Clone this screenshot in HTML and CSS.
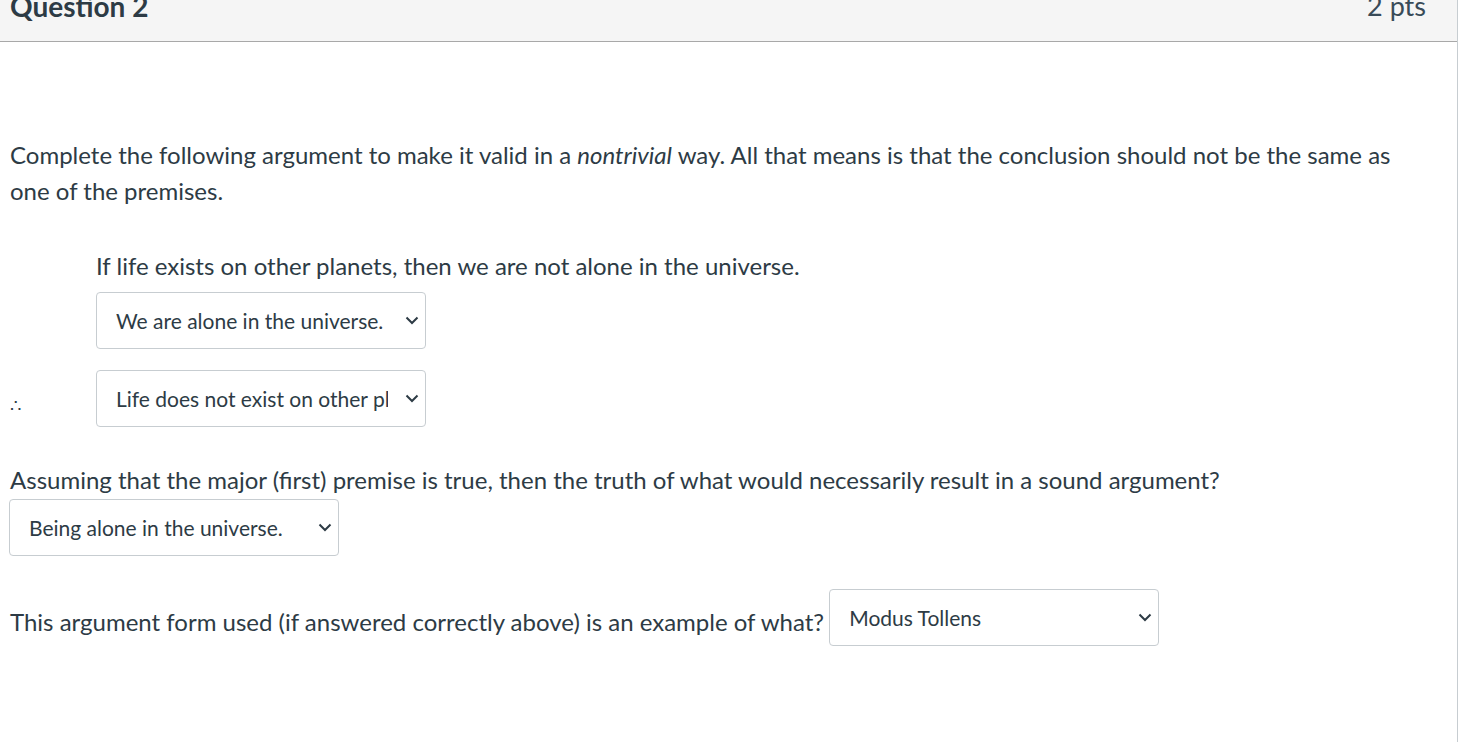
FILE: index.html
```html
<!DOCTYPE html>
<html lang="en">
  <head>
    <meta charset="UTF-8" />
    <meta name="viewport" content="width=device-width, initial-scale=1.0" />
    <title>Question 2</title>
    <link rel="stylesheet" href="styles.css">
  </head>
  <body>
    <div class="question">
      <!-- Header -->
      <div class="question-header">
        <span class="question-name">Question 2</span>
        <span class="question-points">2 pts</span>
      </div>

      <!-- Body -->
      <div class="question-body">
        <p class="intro">
          Complete the following argument to make it valid in a <em>nontrivial</em> way. All that means is that the conclusion should not be the same as one of the premises.
        </p>

        <div class="argument">
          <div class="arg-row premise">
            <span class="therefore"></span>
            <span class="premise-text">If life exists on other planets, then we are not alone in the universe.</span>
          </div>
          <div class="arg-row">
            <span class="therefore"></span>
            <span class="select-wrap">
              <select class="answer">
                <option>We are alone in the universe.</option>
                <option>We are not alone in the universe.</option>
              </select>
              <svg class="chevron" width="14" height="9" viewBox="0 0 14 9"><path d="M1.5 1.5 7 7l5.5-5.5" fill="none" stroke="#2d3b45" stroke-width="2"/></svg>
            </span>
          </div>
          <div class="arg-row">
            <span class="therefore">&there4;</span>
            <span class="select-wrap">
              <select class="answer">
                <option>Life does not exist on other planets.</option>
                <option>Life exists on other planets.</option>
              </select>
              <svg class="chevron" width="14" height="9" viewBox="0 0 14 9"><path d="M1.5 1.5 7 7l5.5-5.5" fill="none" stroke="#2d3b45" stroke-width="2"/></svg>
            </span>
          </div>
        </div>

        <p class="prompt">Assuming that the major (first) premise is true, then the truth of what would necessarily result in a sound argument?</p>
        <span class="select-wrap standalone">
          <select class="answer">
            <option>Being alone in the universe.</option>
            <option>Not being alone in the universe.</option>
          </select>
          <svg class="chevron" width="14" height="9" viewBox="0 0 14 9"><path d="M1.5 1.5 7 7l5.5-5.5" fill="none" stroke="#2d3b45" stroke-width="2"/></svg>
        </span>

        <p class="prompt last">
          This argument form used (if answered correctly above) is an example of what?
          <span class="select-wrap inline">
            <select class="answer">
              <option>Modus Tollens</option>
              <option>Modus Ponens</option>
            </select>
            <svg class="chevron" width="14" height="9" viewBox="0 0 14 9"><path d="M1.5 1.5 7 7l5.5-5.5" fill="none" stroke="#2d3b45" stroke-width="2"/></svg>
          </span>
        </p>
      </div>
    </div>
  </body>
</html>
```

FILE: styles.css
```css
/* General Styles */
body {
  margin: 0;
  background: #fff;
  font-family: Lato, "Open Sans", sans-serif;
  color: #2d3b45;
  overflow: hidden;
}

.question {
  width: 1458px;
  height: 800px;
  border-right: 1px solid #c7cdd1;
  box-sizing: border-box;
  margin-top: -30px;
}

/* Header */
.question-header {
  display: flex;
  justify-content: space-between;
  align-items: center;
  height: 72px;
  padding: 0 31px 0 10px;
  background: #f5f5f5;
  border-bottom: 1px solid #a8a8a8;
  box-sizing: border-box;
  font-size: 28px;
  font-weight: bold;
}

.question-points {
  font-weight: normal;
  font-size: 27px;
  color: #394b58;
}

/* Body */
.question-body {
  padding: 95px 40px 0 10px;
  font-size: 24px;
  line-height: 36px;
}

.intro {
  margin: 0;
}

.intro em {
  font-style: italic;
}

.argument {
  margin: 39px 0 35px;
}

.arg-row {
  display: flex;
  align-items: center;
  margin-bottom: 21px;
}

.arg-row.premise {
  margin-bottom: 8px;
}

.arg-row:last-child {
  margin-bottom: 0;
}

.therefore {
  width: 86px;
  flex-shrink: 0;
  font-size: 18px;
  padding-top: 12px;
}

/* Dropdowns */
.select-wrap {
  position: relative;
  display: inline-block;
  width: 330px;
  height: 57px;
}

.select-wrap.standalone {
  margin-left: -1px;
}

.select-wrap.inline {
  vertical-align: 5px;
  margin-left: -1px;
}

.answer {
  appearance: none;
  -webkit-appearance: none;
  display: block;
  width: 100%;
  height: 100%;
  margin: 0;
  padding: 0 37px 0 19px;
  border: 1px solid #c7cdd1;
  border-radius: 4px;
  background: #fff;
  color: #2d3b45;
  font-family: Lato, "Open Sans", sans-serif;
  font-size: 21px;
}

.chevron {
  position: absolute;
  right: 7px;
  top: 24px;
  pointer-events: none;
}

.prompt {
  margin: 0 0 1px;
}

.prompt.last {
  margin-top: 33px;
}
```
